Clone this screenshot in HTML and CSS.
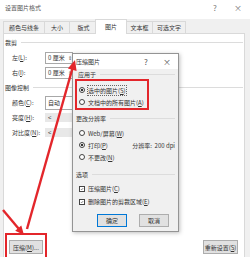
FILE: index.html
```html
<html>
<head>
    <link rel="stylesheet" href="styles.css">
</head>
<body>
    <div class="window">
        <div class="titlebar">
            <span class="title">设置图片格式</span>
            <span class="tb-btns"><span>?</span><span>×</span></span>
        </div>

        <div class="tabs">
            <div class="tab">颜色与线条</div>
            <div class="tab">大小</div>
            <div class="tab">版式</div>
            <div class="tab active">图片</div>
            <div class="tab">文本框</div>
            <div class="tab">可选文字</div>
        </div>

        <div class="page">
            <div class="group"><span>裁剪</span><i class="rule"></i></div>
            <div class="row">
                <label>左(<u>L</u>):</label>
                <div class="spin">0 厘米<span class="spin-arrows">&#8661;</span></div>
            </div>
            <div class="row">
                <label>右(<u>I</u>):</label>
                <div class="spin">0 厘米<span class="spin-arrows">&#8661;</span></div>
            </div>

            <div class="group"><span>图像控制</span><i class="rule"></i></div>
            <div class="row">
                <label>颜色(<u>C</u>):</label>
                <div class="select">自动</div>
            </div>
            <div class="row">
                <label>亮度(<u>H</u>):</label>
                <div class="slider">&lt;</div>
            </div>
            <div class="row">
                <label>对比度(<u>N</u>):</label>
                <div class="slider">&lt;</div>
            </div>

            <div class="page-foot">
                <div class="mark">
                    <button class="btn btn-compress">压缩(<u>M</u>)...</button>
                </div>
                <button class="btn btn-reset">重新设置(<u>S</u>)</button>
            </div>
        </div>

        <!-- compress pictures dialog -->
        <div class="dialog">
            <div class="dlg-title">
                <span>压缩图片</span>
                <span class="dlg-btns-top"><span>?</span><span>×</span></span>
            </div>
            <div class="dlg-body">
                <div class="dlg-group first"><span>应用于</span><i class="rule"></i></div>
                <div class="mark-box">
                    <div class="opt"><i class="radio on"></i><span class="focus">选中的图片(<u>S</u>)</span></div>
                    <div class="opt"><i class="radio"></i><span>文档中的所有图片(<u>A</u>)</span></div>
                </div>

                <div class="dlg-group"><span>更改分辨率</span><i class="rule"></i></div>
                <div class="opts">
                    <div class="opt"><i class="radio"></i><span>Web/屏幕(<u>W</u>)</span></div>
                    <div class="opt"><i class="radio on"></i><span>打印(<u>P</u>)</span><span class="dpi">分辨率:&nbsp; 200 dpi</span></div>
                    <div class="opt"><i class="radio"></i><span>不更改(<u>N</u>)</span></div>
                </div>

                <div class="dlg-group options"><span>选项</span><i class="rule"></i></div>
                <div class="checks">
                    <div class="opt chk-row"><i class="check"><svg viewBox="0 0 6 6"><path d="M1.2 3 L2.5 4.3 L4.9 1.5" fill="none" stroke="#333" stroke-width="0.8"/></svg></i><span>压缩图片(<u>C</u>)</span></div>
                    <div class="opt chk-row"><i class="check"><svg viewBox="0 0 6 6"><path d="M1.2 3 L2.5 4.3 L4.9 1.5" fill="none" stroke="#333" stroke-width="0.8"/></svg></i><span>删除图片的剪裁区域(<u>E</u>)</span></div>
                </div>

                <div class="dlg-foot">
                    <button class="btn btn-ok">确定</button>
                    <button class="btn btn-cancel">取消</button>
                </div>
            </div>
        </div>

        <!-- annotation arrows -->
        <svg class="arrows" width="250" height="257" viewBox="0 0 250 257">
            <line x1="27" y1="229" x2="72.3" y2="69" stroke="#e3262b" stroke-width="2.4"/>
            <polygon points="75,60 76.6,70.9 67.9,68.4" fill="#e3262b"/>
            <line x1="3" y1="210" x2="18.5" y2="228.4" stroke="#e3262b" stroke-width="2.4"/>
            <polygon points="24,235 21.3,225.5 15.2,230.7" fill="#e3262b"/>
        </svg>
    </div>
</body>
</html>
```

FILE: styles.css
```css
body {
    margin: 0;
    font-family: "Noto Sans CJK SC", "Noto Sans", sans-serif;
    font-size: 6px;
    color: #333;
}
u {
    text-decoration: underline;
}
.window {
    position: relative;
    width: 250px;
    height: 257px;
    overflow: hidden;
    background: #f0f0f0;
}
.titlebar {
    height: 19px;
    box-sizing: border-box;
    background: #fff;
    display: flex;
    justify-content: space-between;
    padding: 2px 7px 0 5px;
    line-height: 11px;
    color: #555;
}
.tb-btns {
    display: flex;
    gap: 13px;
    font-size: 8px;
    color: #777;
}
.tb-btns span {
    width: 10px;
    text-align: center;
}
.tabs {
    height: 14px;
    display: flex;
    align-items: flex-end;
    padding-left: 3px;
}
.tab {
    height: 12px;
    line-height: 11px;
    box-sizing: border-box;
    padding: 0 5px;
    border: 1px solid #d9d9d9;
    border-bottom: none;
    margin-right: -1px;
    background: #f0f0f0;
}
.tab:nth-child(2) {
    padding: 0 6px;
}
.tab:nth-child(3) {
    padding: 0 7.5px;
}
.tab:nth-child(5) {
    padding: 0 3.5px;
}
.tab:nth-child(6) {
    padding: 0 4px;
}
.tab.active {
    height: 15px;
    line-height: 14px;
    margin: 0 -1px -1px -2px;
    padding: 0 9px;
    background: #fff;
    position: relative;
    z-index: 1;
}
.page {
    height: 224px;
    box-sizing: border-box;
    margin: 0 5px 0 3px;
    padding-top: 1px;
    background: #fff;
    border: 1px solid #d9d9d9;
    border-bottom: none;
    display: flex;
    flex-direction: column;
}
.group {
    height: 15px;
    display: flex;
    align-items: center;
    padding-left: 1px;
}
.rule {
    flex: 1;
    height: 1px;
    background: #dcdcdc;
    margin: 0 1px 0 4px;
}
.row {
    height: 15px;
    display: flex;
    align-items: center;
    padding-left: 8px;
}
.row label {
    width: 33px;
}
.spin {
    width: 28px;
    height: 12px;
    box-sizing: border-box;
    border: 1px solid #a8a8a8;
    background: #fff;
    display: flex;
    align-items: center;
    padding-left: 2px;
}
.spin-arrows {
    margin-left: auto;
    font-size: 5px;
    color: #555;
}
.select {
    width: 29px;
    height: 14px;
    box-sizing: border-box;
    border: 1px solid #a8a8a8;
    background: #fff;
    display: flex;
    align-items: center;
    padding-left: 2px;
}
.slider {
    width: 40px;
    height: 9px;
    line-height: 9px;
    background: #e8e8e8;
    padding-left: 3px;
    font-size: 6px;
}
.page-foot {
    margin-top: auto;
    display: flex;
    justify-content: space-between;
    align-items: flex-end;
    padding: 0 6px 3px 1px;
}
.mark {
    border: 2px solid #e3262b;
    padding: 5px 2px 4px 2px;
    margin-bottom: -6px;
}
.btn {
    height: 14px;
    padding: 0;
    font-family: inherit;
    font-size: 6px;
    color: #333;
    white-space: nowrap;
    border: 1px solid #adadad;
    background: #e1e1e1;
}
.btn-compress {
    width: 34px;
}
.btn-reset {
    width: 35px;
}

/* dialog */
.dialog {
    position: absolute;
    left: 72px;
    top: 53px;
    width: 107px;
    height: 179px;
    box-sizing: border-box;
    border: 1px solid #949494;
    background: #f0f0f0;
    box-shadow: 1px 1px 4px rgba(0, 0, 0, 0.25);
    display: flex;
    flex-direction: column;
}
.dlg-title {
    height: 15px;
    background: #fff;
    display: flex;
    align-items: center;
    justify-content: space-between;
    padding: 0 6px 0 3px;
}
.dlg-btns-top {
    display: flex;
    gap: 11px;
    font-size: 8px;
    color: #555;
}
.dlg-btns-top span {
    width: 10px;
    text-align: center;
}
.dlg-body {
    padding: 0 2px;
}
.dlg-group {
    height: 12px;
    display: flex;
    align-items: center;
    padding-left: 1px;
    margin-top: 2px;
}
.dlg-group.first {
    height: 10px;
    margin-top: 0;
    padding-left: 3px;
}
.dlg-group.options {
    margin-top: 5px;
}
.mark-box {
    width: 74px;
    box-sizing: border-box;
    border: 2px solid #e3262b;
    padding: 3px 0 0 2px;
}
.opts {
    padding: 3px 0 0 4px;
}
.opt {
    height: 12px;
    display: flex;
    align-items: center;
    white-space: nowrap;
}
.radio {
    width: 6px;
    height: 6px;
    box-sizing: border-box;
    border: 1px solid #444;
    border-radius: 50%;
    background: #fff;
    margin-right: 3px;
}
.radio.on {
    background: radial-gradient(circle, #333 0 1.3px, #fff 1.6px);
}
.focus {
    outline: 1px dotted #666;
    outline-offset: 0;
}
.dpi {
    margin-left: auto;
    padding-right: 1px;
}
.checks {
    padding: 2px 0 0 4px;
}
.chk-row {
    height: 13px;
}
.check {
    width: 6px;
    height: 6px;
    box-sizing: border-box;
    border: 1px solid #444;
    background: #fff;
    margin-right: 3px;
    display: flex;
}
.check svg {
    width: 4px;
    height: 4px;
}
.dlg-foot {
    display: flex;
    gap: 12px;
    padding: 6px 0 0 22px;
}
.dlg-foot .btn {
    width: 30px;
    height: 13px;
}
.btn-ok {
    border-color: #0078d7;
}
.arrows {
    position: absolute;
    left: 0;
    top: 0;
    pointer-events: none;
}
```
